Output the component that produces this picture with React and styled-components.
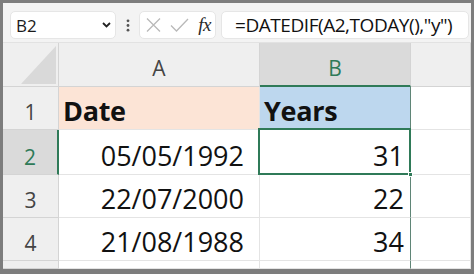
import React from 'react'
import styled, { createGlobalStyle, css } from 'styled-components'

const GREEN = '#2f7a58'

const GlobalStyle = createGlobalStyle`
  html, body {
    margin: 0;
    padding: 0;
    background: #ffffff;
  }
  body {
    font-family: "Open Sans", "Noto Sans", sans-serif;
  }
`

const rows = [
  { n: 1, a: 'Date', b: 'Years', head: true },
  { n: 2, a: '05/05/1992', b: '31' },
  { n: 3, a: '22/07/2000', b: '22' },
  { n: 4, a: '21/08/1988', b: '34' },
]

export default function App() {
  return (
    <>
      <GlobalStyle />
      <Frame>
        <FormulaBar>
          <NameBox>
            <span>B2</span>
            <svg width="9" height="6" viewBox="0 0 9 6">
              <path d="M1 1 L4.5 4.5 L8 1" fill="none" stroke="#222" strokeWidth="1.8" />
            </svg>
          </NameBox>
          <DotsSlot>
            <svg width="4" height="13" viewBox="0 0 4 13">
              <circle cx="2" cy="1.8" r="1.4" fill="#555" />
              <circle cx="2" cy="6.5" r="1.4" fill="#555" />
              <circle cx="2" cy="11.2" r="1.4" fill="#555" />
            </svg>
          </DotsSlot>
          <IconBox>
            <svg width="15" height="14" viewBox="0 0 15 14">
              <path d="M1 0.5 L14 13.5 M14 0.5 L1 13.5" stroke="#b9b9b9" strokeWidth="1.3" />
            </svg>
            <svg width="19" height="14" viewBox="0 0 19 14">
              <path d="M1 7.5 L6.5 13 L18 1" fill="none" stroke="#b9b9b9" strokeWidth="1.3" />
            </svg>
            <Fx>fx</Fx>
          </IconBox>
          <FormulaInput>=DATEDIF(A2,TODAY(),"y")</FormulaInput>
        </FormulaBar>

        <Sheet>
          <Corner>
            <svg width="35" height="38" viewBox="0 0 35 38">
              <polygon points="35,0 35,38 0,38" fill="#d9d9d9" />
            </svg>
          </Corner>
          <ColHeader>A</ColHeader>
          <ColHeader $active>B</ColHeader>
          <ColHeader />

          {rows.map(r => (
            <React.Fragment key={r.n}>
              <RowHeader $active={r.n === 2}>{r.n}</RowHeader>
              <Cell $fill={r.head ? '#fce4d6' : null} $bold={r.head} $align={r.head ? 'left' : 'right'} $padRight={15}>
                {r.a}
              </Cell>
              <Cell
                $fill={r.head ? '#bdd7ee' : null}
                $bold={r.head}
                $align={r.head ? 'left' : 'right'}
                $padRight={6}
                $colB
                $selected={r.n === 2}
              >
                {r.b}
              </Cell>
              <Cell />
            </React.Fragment>
          ))}

          <RowHeader />
          <Cell />
          <Cell $colB />
          <Cell />
        </Sheet>
      </Frame>
    </>
  )
}

const Frame = styled.div`
  width: 474px;
  height: 274px;
  box-sizing: border-box;
  border: 3px solid #7d7d7d;
  border-bottom-width: 5px;
  border-right-width: 3px;
  display: flex;
  flex-direction: column;
  overflow: hidden;
  background: #ffffff;
`

const FormulaBar = styled.div`
  height: 40px;
  flex-shrink: 0;
  box-sizing: border-box;
  display: flex;
  align-items: flex-end;
  padding: 0 2px 3px 7px;
  background: #f3f3f3;
  border-bottom: 1px solid #e2e2e2;
`

const WhiteBox = css`
  height: 28px;
  box-sizing: border-box;
  background: #ffffff;
  border: 1px solid #e6e6e6;
  border-radius: 5px;
  display: flex;
  align-items: center;
`

const NameBox = styled.div`
  ${WhiteBox};
  width: 106px;
  justify-content: space-between;
  padding: 0 4px 0 5px;
  font-size: 17px;
  color: #1a1a1a;
  span {
    line-height: 1;
  }
`

const DotsSlot = styled.div`
  width: 23px;
  height: 28px;
  display: flex;
  align-items: center;
  justify-content: center;
`

const IconBox = styled.div`
  ${WhiteBox};
  width: 77px;
  padding: 0 4px 0 6px;
  justify-content: space-between;
`

const Fx = styled.span`
  font-family: "Liberation Serif", "DejaVu Serif", serif;
  font-style: italic;
  font-size: 19px;
  color: #2a2a2a;
  line-height: 1;
  letter-spacing: -0.5px;
  margin-top: -2px;
`

const FormulaInput = styled.div`
  ${WhiteBox};
  flex: 1;
  margin-left: 5px;
  padding-left: 13px;
  font-size: 19px;
  letter-spacing: -0.45px;
  color: #111111;
  white-space: nowrap;
`

const Sheet = styled.div`
  flex: 1;
  display: grid;
  grid-template-columns: 56px 201px 151px 1fr;
  grid-template-rows: 44px 43px 45px 43px 43px 1fr;
`

const Corner = styled.div`
  box-sizing: border-box;
  background: #efefef;
  border-right: 1px solid #d4d4d4;
  border-bottom: 1px solid #d4d4d4;
  display: flex;
  align-items: flex-end;
  justify-content: flex-end;
  padding: 0 2px 2px 0;
`

const ColHeader = styled.div`
  box-sizing: border-box;
  background: ${p => (p.$active ? '#dadada' : '#efefef')};
  color: ${p => (p.$active ? GREEN : '#444444')};
  border-right: 1px solid #d4d4d4;
  border-bottom: ${p => (p.$active ? `2px solid ${GREEN}` : '1px solid #d4d4d4')};
  font-size: 21px;
  display: flex;
  align-items: flex-end;
  justify-content: center;
  line-height: 1;
  padding-bottom: ${p => (p.$active ? 6 : 7)}px;
`

const RowHeader = styled.div`
  box-sizing: border-box;
  background: ${p => (p.$active ? '#dadada' : '#efefef')};
  color: ${p => (p.$active ? GREEN : '#444444')};
  border-right: ${p => (p.$active ? `2px solid ${GREEN}` : '1px solid #d4d4d4')};
  border-bottom: 1px solid #d4d4d4;
  font-size: 21px;
  display: flex;
  align-items: flex-end;
  justify-content: center;
  line-height: 1;
  padding-bottom: 6px;
`

const Cell = styled.div`
  position: relative;
  box-sizing: border-box;
  background: ${p => p.$fill || '#ffffff'};
  border-right: 1px solid ${p => (p.$colB ? '#5f8576' : '#e4e4e4')};
  border-bottom: 1px solid #e4e4e4;
  font-size: 27px;
  font-weight: ${p => (p.$bold ? 700 : 400)};
  letter-spacing: ${p => (p.$bold ? '-0.3px' : '0')};
  color: #111111;
  display: flex;
  align-items: flex-end;
  justify-content: ${p => (p.$align === 'left' ? 'flex-start' : 'flex-end')};
  padding: 0 ${p => (p.$align === 'left' ? 0 : p.$padRight || 0)}px 5px
    ${p => (p.$align === 'left' ? 4 : 0)}px;
  line-height: 1;
  white-space: nowrap;

  ${p =>
    p.$selected &&
    css`
      &::after {
        content: '';
        position: absolute;
        left: -2px;
        top: -2px;
        right: -1px;
        bottom: -1px;
        border: 2px solid ${GREEN};
        pointer-events: none;
      }
      &::before {
        content: '';
        position: absolute;
        right: -3px;
        bottom: -3px;
        width: 5px;
        height: 5px;
        background: ${GREEN};
        border: 1px solid #ffffff;
        box-sizing: border-box;
        z-index: 1;
      }
    `}
`
